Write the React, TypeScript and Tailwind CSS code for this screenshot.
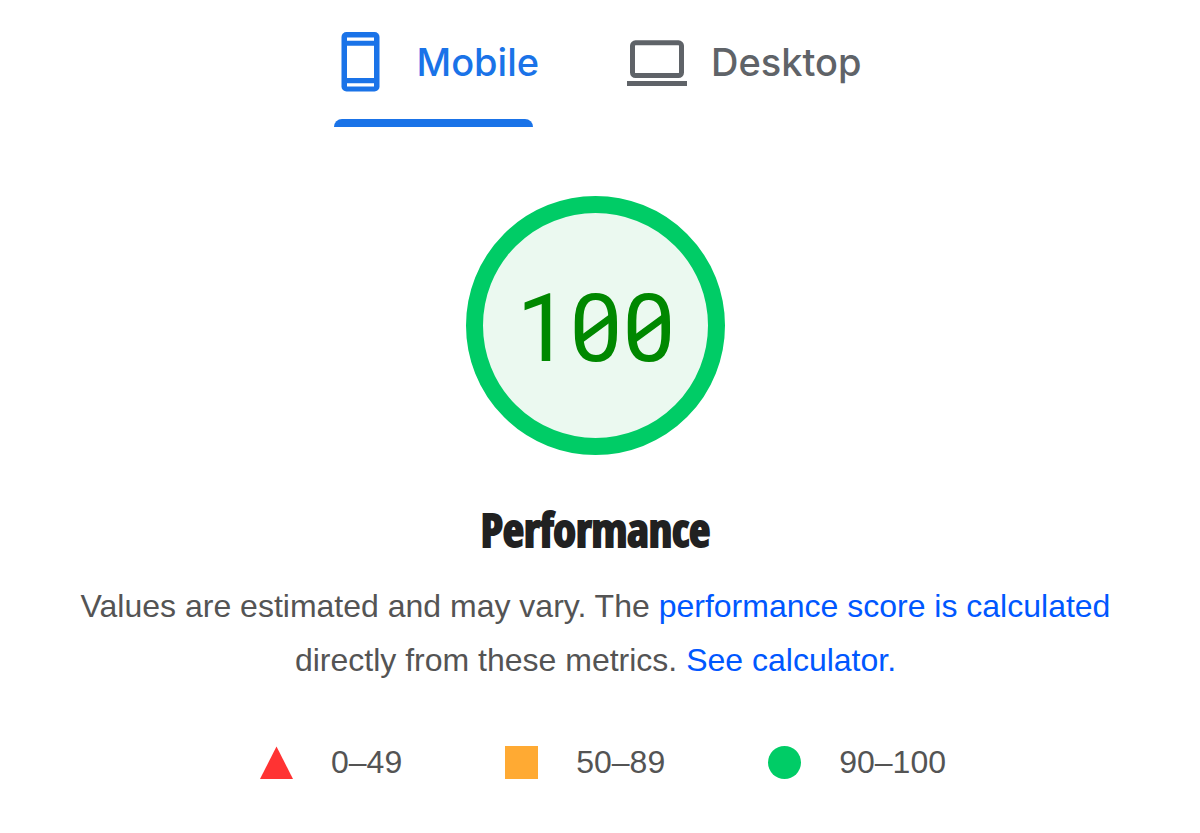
import React from 'react';

const MobileIcon = () => (
  <svg width="40" height="60" viewBox="0 0 40 60" aria-hidden="true">
    <rect x="1.500" y="0" width="38" height="59.500" rx="5" fill="#1a73e8" />
    <path fill="#fff" d="M7 5.500h27v3.200H7zM7 13.700h27v32.300H7zM7 51.200h27v3.200H7z" />
  </svg>
);

const DesktopIcon = () => (
  <svg width="60" height="60" viewBox="0 0 60 60" aria-hidden="true">
    <rect x="5.500" y="10.800" width="49" height="32.700" rx="3" fill="none" stroke="#5f6368" strokeWidth="5" />
    <rect x="0" y="49" width="60" height="5" fill="#5f6368" />
  </svg>
);

const Gauge = ({ score }: { score: number }) => (
  <svg width="259" height="259" viewBox="0 0 259 259" role="img" aria-label={`Score ${score}`}>
    <circle cx="129.5" cy="129.5" r="121" fill="#ebf9f0" stroke="#00cc66" strokeWidth="17" />
    <text x="130" y="165" textAnchor="middle" fill="#008800" className="font-['Roboto',sans-serif] text-[94px]">
      {score}
    </text>
    {/* slashes inside the zeros */}
    <path d="M115 143.500L145 121.500M168 143.500L198 121.500" stroke="#008800" strokeWidth="7" />
  </svg>
);

const legend = [
  { label: '0–49', shape: <path d="M16.500 0.500L33 33H0z" fill="#ff3333" /> },
  { label: '50–89', shape: <path d="M0 0h33v33H0z" fill="#ffaa33" /> },
  { label: '90–100', shape: <circle cx="16.5" cy="16.5" r="16.5" fill="#00cc66" /> },
];

const App = () => {
  return (
    <main className="bg-white pt-8 pb-12 font-['Liberation_Sans',Arial,sans-serif] text-[32px] text-[#545454]">
      <div role="tablist" className="flex justify-center gap-[88px] pl-0.5 font-['Inter',sans-serif] text-[38px] font-medium">
        <button role="tab" aria-selected="true" className="relative flex items-center gap-9 pb-[35px] leading-[60px] text-[#1a73e8]">
          <MobileIcon />
          <span>Mobile</span>
          <span className="absolute bottom-0 -left-1.5 right-1.5 h-2 rounded-t-lg bg-[#1a73e8]" />
        </button>
        <button role="tab" aria-selected="false" className="flex items-center gap-6 pb-[35px] leading-[60px] text-[#5f6368]">
          <DesktopIcon />
          <span>Desktop</span>
        </button>
      </div>

      <section className="flex flex-col items-center pt-[69px] pr-[9px]">
        <Gauge score={100} />
        <h1 className="mt-[46px] font-['Open_Sans_Condensed','Noto_Sans_ExtraCondensed','Noto_Sans_Condensed','Roboto_Condensed','Liberation_Sans_Narrow',Impact,sans-serif] text-[46px] leading-[56px] font-black text-[#212121] [-webkit-text-stroke:2px_#212121]">
          Performance
        </h1>
        <p className="mt-[22px] px-8 text-center leading-[54px]">
          Values are estimated and may vary. The{' '}
          <a href="#score" className="text-[#0057ff]">performance score is calculated</a>
          <br />
          directly from these metrics.{' '}
          <a href="#calculator" className="text-[#0057ff]">See calculator.</a>
        </p>
      </section>

      <ul className="mt-[51px] flex justify-center gap-[103px] pl-1.5">
        {legend.map((item) => (
          <li key={item.label} className="flex items-center gap-[38px]">
            <svg width="33" height="33" viewBox="0 0 33 33" aria-hidden="true">
              {item.shape}
            </svg>
            <span>{item.label}</span>
          </li>
        ))}
      </ul>
    </main>
  );
};

export default App;
